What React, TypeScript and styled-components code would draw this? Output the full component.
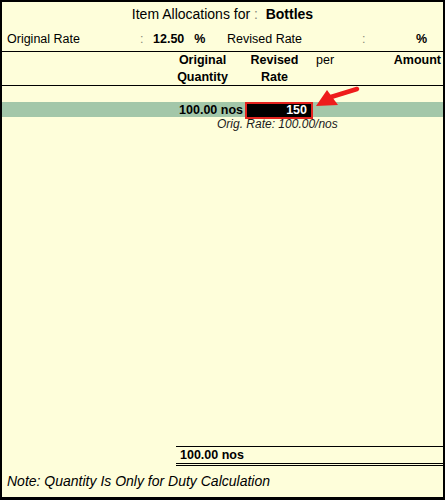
import React from "react";
import styled, { createGlobalStyle } from "styled-components";

const Global = createGlobalStyle`
  html, body { margin: 0; padding: 0; background: #ffffff; }
  body { font-family: "Liberation Sans", Arial, sans-serif; }
`;

const Frame = styled.div`
  position: relative;
  box-sizing: border-box;
  width: 445px;
  height: 500px;
  border: 2px solid #000;
  border-bottom-width: 3px;
  background: #fefeda;
  display: flex;
  flex-direction: column;
  font-family: "Liberation Sans", Arial, sans-serif;
  color: #000;
  font-size: 12.5px;
`;

const Title = styled.div`
  height: 25px;
  line-height: 25px;
  font-size: 14px;
  text-align: center;
  padding-right: 0px;
  white-space: pre;
`;

const Colon = styled.span`
  color: #8a8a7a;
`;

const Bold = styled.span`
  font-weight: bold;
`;

const RateRow = styled.div`
  height: 24px;
  line-height: 24px;
  display: grid;
  grid-template-columns: 136px 13px 74px 135px 12px 1fr;
  border-bottom: 1px solid #000;
  white-space: pre;
`;

const Cell = styled.div<{ $pl?: number; $pr?: number; $align?: string }>`
  padding-left: ${(p) => p.$pl ?? 0}px;
  padding-right: ${(p) => p.$pr ?? 0}px;
  text-align: ${(p) => p.$align ?? "left"};
  white-space: pre;
`;

const Pct = styled.span`
  font-weight: bold;
  margin-left: 10px;
`;

const Table = styled.div`
  display: grid;
  grid-template-columns: 158px 85px 68px 37px 1fr;
`;

const HeaderRow = styled(Table)`
  height: 33px;
  line-height: 16.5px;
  border-bottom: 1px solid #000;
`;

const HeadCell = styled.div<{ $bold?: boolean; $align?: string; $pl?: number; $pr?: number }>`
  font-weight: ${(p) => (p.$bold ? "bold" : "normal")};
  text-align: ${(p) => p.$align ?? "center"};
  padding-left: ${(p) => p.$pl ?? 0}px;
  padding-right: ${(p) => p.$pr ?? 0}px;
`;

const Gap = styled.div`
  height: 16px;
`;

const EntryRow = styled(Table)`
  height: 15px;
  background: #a3c7a9;
  align-items: center;
`;

const Qty = styled.div`
  font-weight: bold;
  text-align: right;
  padding-right: 2px;
  line-height: 15px;
`;

const RateInput = styled.div`
  box-sizing: border-box;
  height: 17px;
  border: 2px solid #e4241f;
  background: #000;
  color: #fff;
  font-weight: bold;
  text-align: right;
  padding-right: 4px;
  line-height: 13px;
`;

const SubLine = styled.div`
  height: 14px;
  line-height: 14px;
  font-size: 12px;
  font-style: italic;
  padding-left: 215px;
  color: #1a1a1a;
`;

const Spacer = styled.div`
  flex: 1;
`;

const TotalWrap = styled.div`
  padding-left: 174px;
`;

const TotalBox = styled.div`
  border-top: 1px solid #000;
  border-bottom: 3px double #000;
  height: 16px;
  line-height: 16px;
  padding-left: 4px;
  font-weight: bold;
`;

const Note = styled.div`
  height: 31px;
  line-height: 31px;
  font-size: 14px;
  font-style: italic;
  padding-left: 5px;
`;

const Arrow = styled.svg`
  position: absolute;
  left: 308px;
  top: 78px;
  width: 52px;
  height: 32px;
  overflow: visible;
`;

export default function App() {
  return (
    <>
      <Global />
      <Frame>
        <Title>
          Item Allocations for <Colon>:</Colon>  <Bold>Bottles</Bold>
        </Title>
        <RateRow>
          <Cell $pl={5}>Original Rate</Cell>
          <Cell $pl={2}>
            <Colon>:</Colon>
          </Cell>
          <Cell $pl={2}>
            <Bold>12.50</Bold>
            <Pct>%</Pct>
          </Cell>
          <Cell $pl={2}>Revised Rate</Cell>
          <Cell $pl={2}>
            <Colon>:</Colon>
          </Cell>
          <Cell $align="right" $pr={16}>
            <Bold>%</Bold>
          </Cell>
        </RateRow>
        <HeaderRow>
          <div />
          <HeadCell $bold>
            Original
            <br />
            Quantity
          </HeadCell>
          <HeadCell $bold $pr={9}>
            Revised
            <br />
            Rate
          </HeadCell>
          <HeadCell $align="left" $pl={3}>
            per
          </HeadCell>
          <HeadCell $bold $align="right" $pr={2}>
            Amount
          </HeadCell>
        </HeaderRow>
        <Gap />
        <EntryRow>
          <div />
          <Qty>100.00 nos</Qty>
          <RateInput>150</RateInput>
          <div />
          <div />
        </EntryRow>
        <SubLine>Orig. Rate: 100.00/nos</SubLine>
        <Spacer />
        <TotalWrap>
          <TotalBox>100.00 nos</TotalBox>
        </TotalWrap>
        <Note>Note: Quantity Is Only for Duty Calculation</Note>
        <Arrow viewBox="308 78 52 32">
          <line x1="329" y1="95" x2="355" y2="87" stroke="#ee1c1c" strokeWidth="4.5" strokeLinecap="round" />
          <polygon points="314,104 325,88 336,103" fill="#ee1c1c" />
        </Arrow>
      </Frame>
    </>
  );
}
